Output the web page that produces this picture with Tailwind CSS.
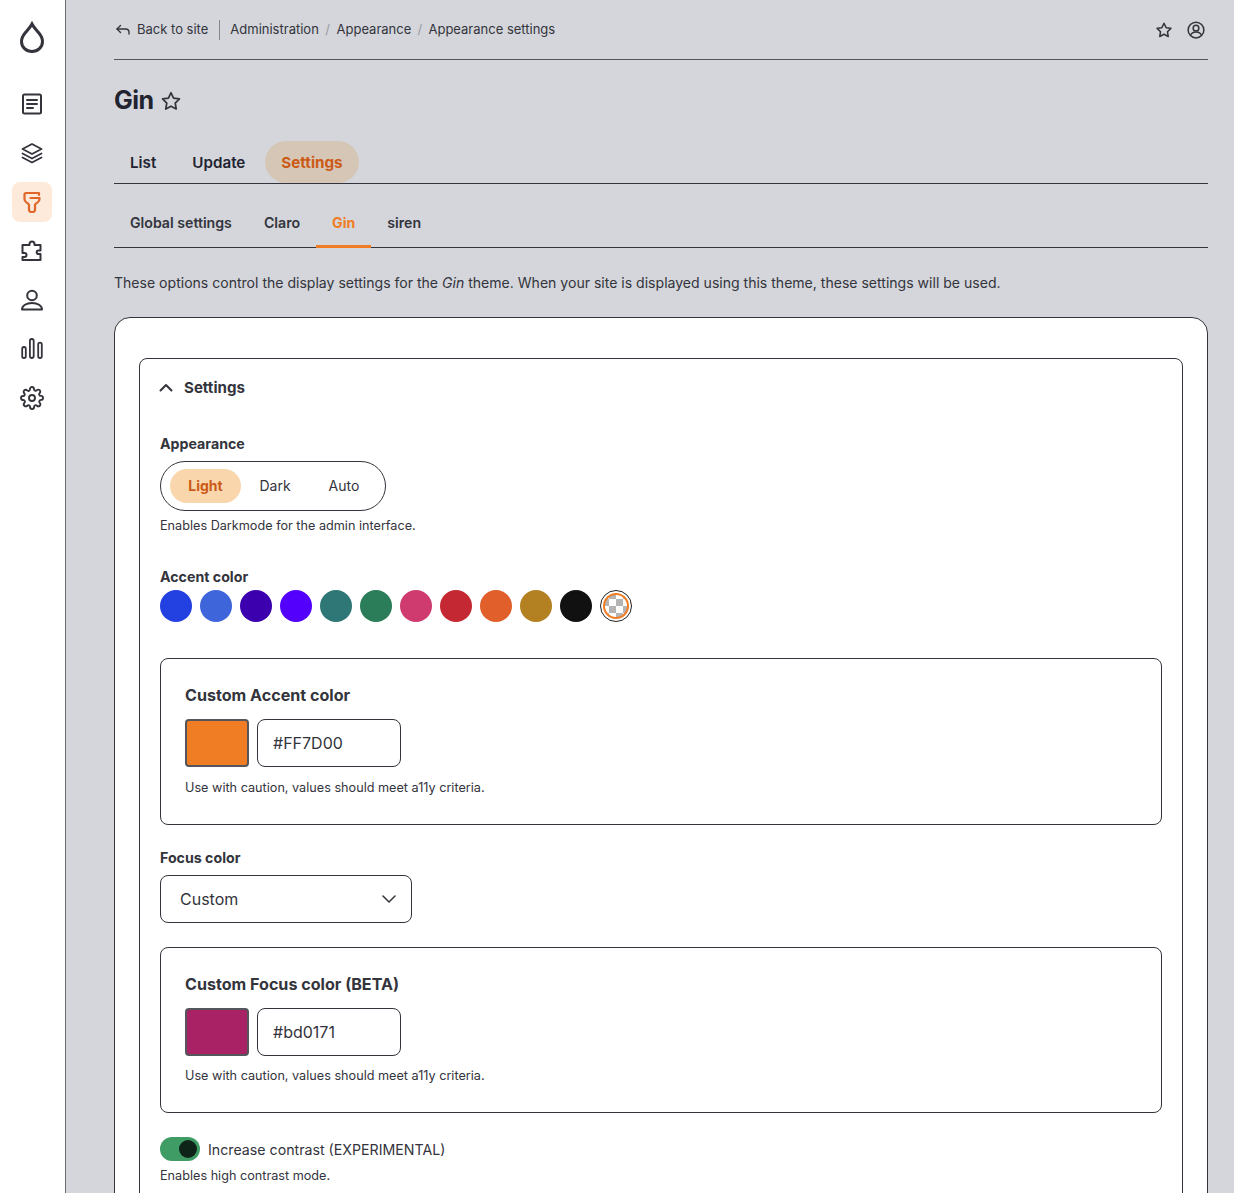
<!DOCTYPE html>
<html lang="en">
<head>
  <meta charset="UTF-8">
  <meta name="viewport" content="width=device-width, initial-scale=1.0">
  <title>Gin settings</title>
  <script src="https://cdn.jsdelivr.net/npm/@tailwindcss/browser@4"></script>
</head>
<body class="bg-[#d4d6db] font-['Inter','Liberation_Sans',sans-serif] text-[#222330] h-[1193px] overflow-hidden">
<div class="flex h-[1193px] overflow-hidden">
  <!-- sidebar -->
  <aside class="w-[66px] shrink-0 bg-white border-r border-[#6b6c72] pr-[1px] flex flex-col items-center text-[#33343c]">
    <svg class="mt-[21px] w-[28px] h-[34px]" viewBox="0 0 28 34" fill="none" stroke="currentColor" stroke-width="3"><path d="M14 3c1.500 3 4 5.500 6.500 8.500 2.500 3 4 5.500 4 9 0 5.800-4.700 10-10.500 10S3.500 26.300 3.500 20.500c0-3.500 1.500-6 4-9S12.500 6 14 3z"/></svg>
    <div class="mt-[29px] flex flex-col items-center gap-[9px]">
      <div class="w-10 h-10 flex items-center justify-center">
        <svg class="w-6 h-6" viewBox="0 0 24 24" fill="none" stroke="currentColor" stroke-width="2" stroke-linecap="round"><rect x="3" y="2.500" width="18" height="19" rx="1.500"/><path d="M7 8h10M7 12h10M7 16h6"/></svg>
      </div>
      <div class="w-10 h-10 flex items-center justify-center">
        <svg class="w-6 h-6" viewBox="0 0 24 24" fill="none" stroke="currentColor" stroke-width="1.800" stroke-linejoin="round" stroke-linecap="round"><path d="M12 3l9.500 5-9.500 5-9.500-5z"/><path d="M2.500 12.500l9.500 5 9.500-5"/><path d="M2.500 16.500l9.500 5 9.500-5"/></svg>
      </div>
      <div class="w-10 h-10 rounded-[8px] bg-[#fdeada] flex items-center justify-center text-[#e0662a]">
        <svg class="w-6 h-6" viewBox="0 0 24 24" fill="none" stroke="currentColor" stroke-width="2.200" stroke-linejoin="round" stroke-linecap="round"><path d="M19 5V3H6c-.8 0-1.500.7-1.500 1.500V9c0 1.200.6 2.200 1.500 3l3 2.500V20c0 1.500 1.200 2 3 2s3-.5 3-2v-5.500l3-2.500c.8-.7 1.500-1.800 1.500-3V8h-9"/></svg>
      </div>
      <div class="w-10 h-10 flex items-center justify-center">
        <svg class="w-6 h-6" viewBox="0 0 24 24" fill="none" stroke="currentColor" stroke-width="2" stroke-linejoin="round"><path d="M9.500 6V5a2.500 2.500 0 0 1 5 0v1h6v5.500h-2a1.800 1.800 0 0 0 0 3.600h2v6H2.500v-3h2a2 2 0 0 0 0-4h-2V6z"/></svg>
      </div>
      <div class="w-10 h-10 flex items-center justify-center">
        <svg class="w-6 h-6" viewBox="0 0 24 24" fill="none" stroke="currentColor" stroke-width="2" stroke-linejoin="round"><circle cx="12" cy="7.500" r="4.800"/><path d="M2 21.500c0-4 4.500-6.500 10-6.500s10 2.500 10 6.500z"/></svg>
      </div>
      <div class="w-10 h-10 flex items-center justify-center">
        <svg class="w-6 h-6" viewBox="0 0 24 24" fill="none" stroke="currentColor" stroke-width="1.800"><rect x="2.200" y="10" width="3.600" height="11" rx="1.800"/><rect x="9.900" y="2" width="3.800" height="19" rx="1.900"/><rect x="18.200" y="5.700" width="3.600" height="15.300" rx="1.800"/></svg>
      </div>
      <div class="w-10 h-10 flex items-center justify-center">
        <svg class="w-6 h-6" viewBox="0 0 24 24" fill="none" stroke="currentColor" stroke-width="1.900" stroke-linecap="round" stroke-linejoin="round"><circle cx="12" cy="12" r="3"/><path d="M19.400 15a1.650 1.650 0 0 0 .33 1.820l.06.06a2 2 0 1 1-2.830 2.830l-.06-.06a1.650 1.650 0 0 0-2.820 1.170V21a2 2 0 1 1-4 0v-.09A1.650 1.650 0 0 0 7.270 19.700l-.06.06a2 2 0 1 1-2.830-2.830l.06-.06a1.650 1.650 0 0 0-1.170-2.820H3a2 2 0 1 1 0-4h.09A1.650 1.650 0 0 0 4.300 7.270l-.06-.06a2 2 0 1 1 2.830-2.830l.06.06a1.650 1.650 0 0 0 2.820-1.170V3a2 2 0 1 1 4 0v.09a1.650 1.650 0 0 0 2.820 1.170l.06-.06a2 2 0 1 1 2.830 2.830l-.06.06a1.650 1.650 0 0 0 1.170 2.820H21a2 2 0 1 1 0 4h-.09a1.650 1.650 0 0 0-1.510 1.090z"/></svg>
      </div>
    </div>
  </aside>

  <main class="flex-1 min-w-0 pl-[48px] pr-[26px]">
    <!-- breadcrumb -->
    <div class="h-[60px] border-b border-[#55565c] flex items-center text-[13px] text-[#33343c]">
      <svg class="w-[16px] h-[16px] ml-[1px] mr-[6px]" viewBox="0 0 16 16" fill="none" stroke="currentColor" stroke-width="1.400" stroke-linecap="round" stroke-linejoin="round"><path d="M5.500 3.500L2 7l3.500 3.500"/><path d="M2 7h8.500c2 0 3.500 1.500 3.500 3.500V12"/></svg>
      <span>Back to site</span>
      <span class="w-px h-[20px] bg-[#85868c] mx-[10.500px]"></span>
      <span>Administration</span>
      <span class="mx-[6.500px] text-[#9a9ba1]">/</span>
      <span>Appearance</span>
      <span class="mx-[6.250px] text-[#9a9ba1]">/</span>
      <span>Appearance settings</span>
      <div class="ml-auto flex items-center gap-[14px] mr-[3px]">
        <svg class="w-[18px] h-[18px]" viewBox="0 0 24 24" fill="none" stroke="currentColor" stroke-width="2" stroke-linejoin="round"><path d="M12 3l2.800 5.900 6.400.9-4.600 4.500 1.100 6.400L12 17.700l-5.700 3 1.100-6.400-4.600-4.500 6.400-.9z"/></svg>
        <svg class="w-[18px] h-[18px]" viewBox="0 0 24 24" fill="none" stroke="currentColor" stroke-width="2"><circle cx="12" cy="12" r="10.500"/><circle cx="12" cy="9.500" r="3.800"/><path d="M4.800 19c1-3 3.800-4.500 7.200-4.500s6.200 1.500 7.200 4.500"/></svg>
      </div>
    </div>

    <!-- title -->
    <div class="h-[81px] flex items-center">
      <h1 class="text-[25px] font-bold tracking-[-0.5px] leading-none">Gin</h1>
      <svg class="w-[22px] h-[22px] ml-[6px] text-[#33343c]" viewBox="0 0 24 24" fill="none" stroke="currentColor" stroke-width="1.900" stroke-linejoin="round"><path d="M12 3l2.800 5.900 6.400.9-4.600 4.500 1.100 6.400L12 17.700l-5.700 3 1.100-6.400-4.600-4.500 6.400-.9z"/></svg>
    </div>

    <!-- primary tabs -->
    <div class="h-[43px] border-b border-[#33343c] flex items-stretch text-[15.200px] font-semibold">
      <span class="px-4 pt-[3px] flex items-center">List</span>
      <span class="px-[20px] pt-[3px] flex items-center">Update</span>
      <span class="px-4 pt-[3px] flex items-center rounded-[21px] bg-[#d6c6b6] text-[#cc5a17] font-bold">Settings</span>
    </div>

    <!-- secondary tabs -->
    <div class="mt-[15px] h-[49px] border-b border-[#33343c] flex items-stretch text-[14.150px] font-semibold text-[#33343c]">
      <span class="px-4 flex items-center">Global settings</span>
      <span class="px-4 flex items-center">Claro</span>
      <span class="px-4 pt-[1px] flex items-center text-[#f07d24] font-bold border-b-[3px] border-[#f07d24] h-[49px]">Gin</span>
      <span class="px-4 flex items-center">siren</span>
    </div>

    <p class="mt-[25px] text-[14.050px] leading-[20px] text-[#33343c]">These options control the display settings for the <em>Gin</em> theme. When your site is displayed using this theme, these settings will be used.</p>

    <!-- card -->
    <section class="mt-[24px] bg-white border border-[#33343c] rounded-[16px] px-[24px] pt-[40px] h-[1000px]">
      <div class="border border-[#33343c] rounded-[8px] px-[20px] h-[950px]">
        <div class="h-[57px] pt-[1px] flex items-center text-[15.100px] font-bold text-[#33343c]">
          <svg class="w-[14px] h-[14px] mr-[11px] -ml-[1px]" viewBox="0 0 14 14" fill="none" stroke="currentColor" stroke-width="2" stroke-linecap="round" stroke-linejoin="round"><path d="M1.500 9.500L7 4l5.500 5.500"/></svg>
          Settings
        </div>

        <label class="block mt-[18px] text-[14.200px] leading-[20px] font-bold text-[#33343c]">Appearance</label>
        <div class="mt-[7px] w-[226px] h-[50px] border border-[#33343c] rounded-full flex items-center pl-[9px] text-[14px] text-[#33343c]">
          <span class="w-[71px] h-[34px] pb-[2px] rounded-full bg-[#f9d6ac] text-[#cc5a17] font-bold flex items-center justify-center">Light</span>
          <span class="w-[68px] mb-[2px] text-center">Dark</span>
          <span class="w-[38px] ml-[16px] mb-[2px] text-center">Auto</span>
        </div>
        <p class="mt-[7px] text-[12.660px] leading-[16px] text-[#33343c]">Enables Darkmode for the admin interface.</p>

        <label class="block mt-[33px] text-[14.200px] leading-[20px] font-bold text-[#33343c]">Accent color</label>
        <div class="mt-[3px] flex gap-2">
          <span class="w-8 h-8 rounded-full bg-[#2340e0]"></span>
          <span class="w-8 h-8 rounded-full bg-[#3e66da]"></span>
          <span class="w-8 h-8 rounded-full bg-[#3c00af]"></span>
          <span class="w-8 h-8 rounded-full bg-[#5300fc]"></span>
          <span class="w-8 h-8 rounded-full bg-[#2f7776]"></span>
          <span class="w-8 h-8 rounded-full bg-[#2a7d58]"></span>
          <span class="w-8 h-8 rounded-full bg-[#cf3b6f]"></span>
          <span class="w-8 h-8 rounded-full bg-[#c42832]"></span>
          <span class="w-8 h-8 rounded-full bg-[#e05f2b]"></span>
          <span class="w-8 h-8 rounded-full bg-[#b38121]"></span>
          <span class="w-8 h-8 rounded-full bg-[#111111]"></span>
          <span class="w-8 h-8 rounded-full border border-[#222] bg-white flex items-center justify-center">
            <span class="w-[26px] h-[26px] rounded-full border-2 border-[#f07d24] overflow-hidden bg-[repeating-conic-gradient(#b4b4b4_0_25%,#ffffff_0_50%)] bg-[length:14px_14px] bg-center"></span>
          </span>
        </div>

        <div class="mt-[36px] border border-[#33343c] rounded-[8px] h-[167px] px-[24px] pt-[26px]">
          <h3 class="text-[16.100px] leading-[20px] font-bold text-[#33343c]">Custom Accent color</h3>
          <div class="mt-[14px] flex gap-2">
            <span class="w-[64px] h-[48px] rounded-[4px] border-2 border-[#55565c] bg-[#f07d24]"></span>
            <span class="w-[144px] h-[48px] rounded-[8px] border border-[#33343c] px-[15px] flex items-center text-[16px] text-[#33343c]">#FF7D00</span>
          </div>
          <p class="mt-[13px] text-[12.660px] leading-[16px] text-[#33343c]">Use with caution, values should meet a11y criteria.</p>
        </div>

        <label class="block mt-[23px] text-[14.200px] leading-[20px] font-bold text-[#33343c]">Focus color</label>
        <div class="mt-[7px] w-[252px] h-[48px] border border-[#33343c] rounded-[8px] pl-[19px] pr-[15px] flex items-center justify-between text-[16px] text-[#33343c]">
          Custom
          <svg class="w-[14px] h-[14px]" viewBox="0 0 14 14" fill="none" stroke="currentColor" stroke-width="1.500" stroke-linecap="round" stroke-linejoin="round"><path d="M1 4l6 6 6-6"/></svg>
        </div>

        <div class="mt-[24px] border border-[#33343c] rounded-[8px] h-[166px] px-[24px] pt-[26px]">
          <h3 class="text-[16.100px] leading-[20px] font-bold text-[#33343c]">Custom Focus color (BETA)</h3>
          <div class="mt-[14px] flex gap-2">
            <span class="w-[64px] h-[48px] rounded-[4px] border-2 border-[#55565c] bg-[#a92265]"></span>
            <span class="w-[144px] h-[48px] rounded-[8px] border border-[#33343c] px-[15px] flex items-center text-[16px] text-[#33343c]">#bd0171</span>
          </div>
          <p class="mt-[12px] text-[12.660px] leading-[16px] text-[#33343c]">Use with caution, values should meet a11y criteria.</p>
        </div>

        <div class="mt-[24px] flex items-start">
          <span class="w-[40px] h-[24px] rounded-full bg-[#3f9c64] flex items-center justify-end pr-[3px]">
            <span class="w-[18px] h-[18px] rounded-full bg-[#0f2418]"></span>
          </span>
          <span class="ml-[8px] mt-[1px] text-[14.200px] leading-[24px] text-[#33343c]">Increase contrast (EXPERIMENTAL)</span>
        </div>
        <p class="mt-[6px] text-[12.660px] leading-[16px] text-[#33343c]">Enables high contrast mode.</p>
      </div>
    </section>
  </main>
</div>
</body>
</html>
